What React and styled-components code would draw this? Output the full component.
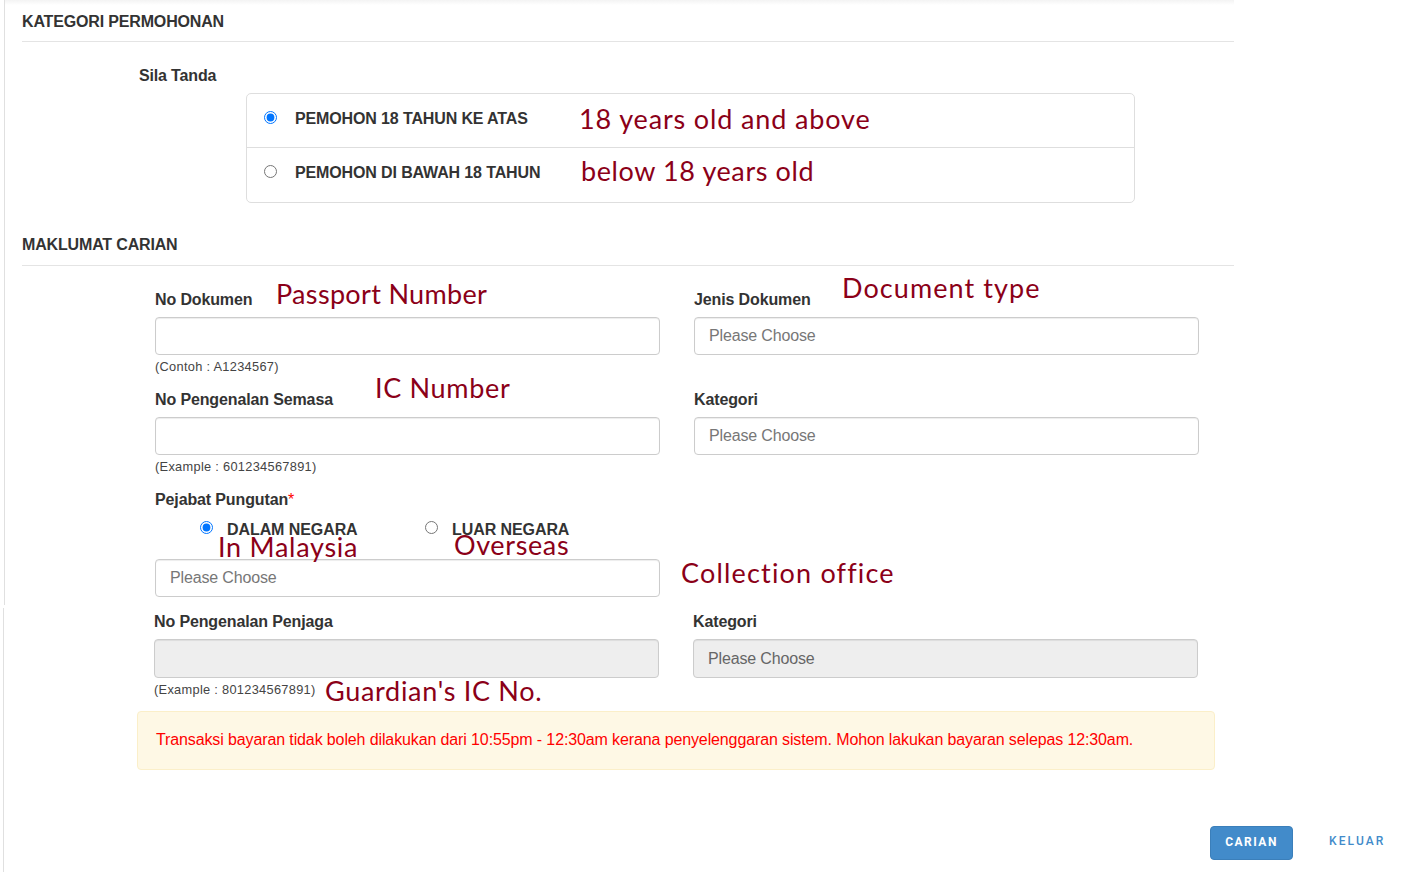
import React from 'react';
import styled, { createGlobalStyle } from 'styled-components';

const Global = createGlobalStyle`
  html, body { margin: 0; padding: 0; background: #fff; }
  body { font-family: "Liberation Sans", Arial, sans-serif; color: #333; }
`;

const Page = styled.div`
  position: relative;
  width: 1420px;
  height: 892px;
  overflow: hidden;
  background: #fff;
`;

const Upper = styled.div`
  margin-left: 4px;
  height: 605px;
  width: 1230px;
  box-sizing: border-box;
  border-left: 1px solid #e0e0e0;
  background: linear-gradient(#f3f3f3, #fff 5px);
`;

const Lower = styled.div`
  margin-top: 3px;
  margin-left: 3px;
  height: 264px;
  padding-top: 2px;
  box-sizing: border-box;
  border-left: 1px solid #e0e0e0;
`;

const SectionTitle = styled.h2`
  margin: 0 0 0 17px;
  font-size: 16px;
  font-weight: 700;
  line-height: 24px;
  letter-spacing: -0.16px;
  padding-top: ${(p) => p.$top}px;
  padding-bottom: ${(p) => p.$bottom}px;
  border-bottom: 1px solid #e4e4e4;
`;

const CheckLabel = styled.div`
  margin: 22px 0 5px 134px;
  font-size: 16px;
  font-weight: 700;
  line-height: 24px;
  letter-spacing: -0.16px;
`;

const OptionCard = styled.div`
  margin-left: 241px;
  width: 889px;
  height: 110px;
  box-sizing: border-box;
  border: 1px solid #dedede;
  border-radius: 5px;
  display: flex;
  flex-direction: column;
`;

const OptionRow = styled.label`
  flex: 1;
  display: flex;
  align-items: center;
  padding: 0 0 5px 17px;
  gap: 18px;
  font-size: 16px;
  font-weight: 700;
  letter-spacing: -0.13px;
  &:first-child { flex: 0 0 53px; box-sizing: border-box; padding-bottom: 3px; }
  & + & { border-top: 1px solid #dedede; }
`;

const Radio = styled.input.attrs({ type: 'radio' })`
  width: 13px;
  height: 13px;
  margin: 0 0 ${(p) => p.$lift}px;
`;

const FormGrid = styled.div`
  margin-top: ${(p) => p.$top}px;
  margin-left: 150px;
  display: grid;
  grid-template-columns: 505px 505px;
  column-gap: 34px;
`;

const Field = styled.div`
  height: ${(p) => p.$height || 100}px;
`;

const FieldLabel = styled.div`
  font-size: 16px;
  font-weight: 700;
  line-height: 24px;
  letter-spacing: -0.13px;
  margin-bottom: 5px;
`;

const Required = styled.span`
  color: #f00;
  font-weight: 400;
`;

const TextBox = styled.input`
  display: block;
  width: 100%;
  height: ${(p) => p.$height || 38}px;
  box-sizing: border-box;
  padding: 0 14px;
  font: 16px "Liberation Sans", Arial, sans-serif;
  letter-spacing: -0.15px;
  color: #555;
  background: #fff;
  border: 1px solid #ccc;
  border-radius: 4px;
  box-shadow: inset 0 1px 1px rgba(0, 0, 0, 0.075);
  outline: none;
  &::placeholder { color: #777; opacity: 1; }
  &:disabled { background: #eee; }
  &:disabled::placeholder { color: #666; }
`;

const Hint = styled.div`
  font-size: 12.8px;
  line-height: 24px;
  letter-spacing: 0.3px;
  color: #444;
`;

const RadioGroup = styled.div`
  display: flex;
  height: 24px;
  margin: 6px 0 17px 45px;
`;

const RadioOption = styled.label`
  width: 225px;
  display: flex;
  align-items: center;
  gap: 14px;
  font-size: 16px;
  font-weight: 700;
  letter-spacing: -0.08px;
  white-space: nowrap;
`;

const Alert = styled.div`
  margin: 9px 0 0 133px;
  width: 1078px;
  height: 59px;
  box-sizing: border-box;
  padding: 0 0 1px 18px;
  display: flex;
  align-items: center;
  font-size: 16px;
  letter-spacing: -0.12px;
  color: #f00;
  background: #fef8e5;
  border: 1px solid #fbefc9;
  border-radius: 4px;
`;

const Actions = styled.div`
  margin: 56px 0 0 1206px;
  display: flex;
  align-items: center;
  gap: 36px;
`;

const PrimaryButton = styled.button`
  width: 83px;
  height: 34px;
  padding: 0 0 3px;
  font: 700 12px Roboto, "Liberation Sans", sans-serif;
  letter-spacing: 1.5px;
  color: #fff;
  background: #428bca;
  border: 1px solid #3b7fba;
  border-radius: 4px;
`;

const LinkButton = styled.a`
  font: 500 12px Roboto, "Liberation Sans", sans-serif;
  letter-spacing: 2.1px;
  color: #428bca;
  margin-bottom: 4px;
`;

const Note = styled.div`
  position: absolute;
  left: ${(p) => p.$x}px;
  top: ${(p) => p.$y}px;
  font-family: Lato, "Liberation Sans", sans-serif;
  font-size: 27px;
  line-height: 32px;
  letter-spacing: ${(p) => p.$spacing}px;
  color: #8b0018;
  white-space: nowrap;
  pointer-events: none;
`;

export default function App() {
  return (
    <Page>
      <Global />
      <Upper>
        <SectionTitle $top={10} $bottom={7}>KATEGORI PERMOHONAN</SectionTitle>
        <CheckLabel>Sila Tanda</CheckLabel>
        <OptionCard>
          <OptionRow><Radio name="kategori" $lift={4} defaultChecked />PEMOHON 18 TAHUN KE ATAS</OptionRow>
          <OptionRow><Radio name="kategori" $lift={2} />PEMOHON DI BAWAH 18 TAHUN</OptionRow>
        </OptionCard>
        <SectionTitle $top={30} $bottom={8}>MAKLUMAT CARIAN</SectionTitle>
        <FormGrid $top={22}>
          <Field>
            <FieldLabel>No Dokumen</FieldLabel>
            <TextBox />
            <Hint>(Contoh : A1234567)</Hint>
          </Field>
          <Field>
            <FieldLabel>Jenis Dokumen</FieldLabel>
            <TextBox placeholder="Please Choose" />
          </Field>
          <Field>
            <FieldLabel>No Pengenalan Semasa</FieldLabel>
            <TextBox />
            <Hint>(Example : 601234567891)</Hint>
          </Field>
          <Field>
            <FieldLabel>Kategori</FieldLabel>
            <TextBox placeholder="Please Choose" />
          </Field>
          <Field $height={110}>
            <FieldLabel>Pejabat Pungutan<Required>*</Required></FieldLabel>
            <RadioGroup>
              <RadioOption><Radio name="pejabat" $lift={6} defaultChecked />DALAM NEGARA</RadioOption>
              <RadioOption><Radio name="pejabat" $lift={6} />LUAR NEGARA</RadioOption>
            </RadioGroup>
            <TextBox placeholder="Please Choose" />
          </Field>
        </FormGrid>
      </Upper>
      <Lower>
        <FormGrid $top={0}>
          <Field $height={92}>
            <FieldLabel>No Pengenalan Penjaga</FieldLabel>
            <TextBox $height={39} disabled />
            <Hint>(Example : 801234567891)</Hint>
          </Field>
          <Field $height={92}>
            <FieldLabel>Kategori</FieldLabel>
            <TextBox $height={39} placeholder="Please Choose" disabled />
          </Field>
        </FormGrid>
        <Alert>Transaksi bayaran tidak boleh dilakukan dari 10:55pm - 12:30am kerana penyelenggaran sistem. Mohon lakukan bayaran selepas 12:30am.</Alert>
        <Actions>
          <PrimaryButton>CARIAN</PrimaryButton>
          <LinkButton>KELUAR</LinkButton>
        </Actions>
      </Lower>
      <Note $x={579} $y={103} $spacing={0.86}>18 years old and above</Note>
      <Note $x={581} $y={155} $spacing={0.6}>below 18 years old</Note>
      <Note $x={276} $y={278} $spacing={0.33}>Passport Number</Note>
      <Note $x={842} $y={272} $spacing={1.08}>Document type</Note>
      <Note $x={375} $y={372} $spacing={0.67}>IC Number</Note>
      <Note $x={218} $y={531} $spacing={0.73}>In Malaysia</Note>
      <Note $x={454} $y={529} $spacing={0.63}>Overseas</Note>
      <Note $x={681} $y={557} $spacing={1.18}>Collection office</Note>
      <Note $x={325} $y={675} $spacing={0.7}>Guardian's IC No.</Note>
    </Page>
  );
}
